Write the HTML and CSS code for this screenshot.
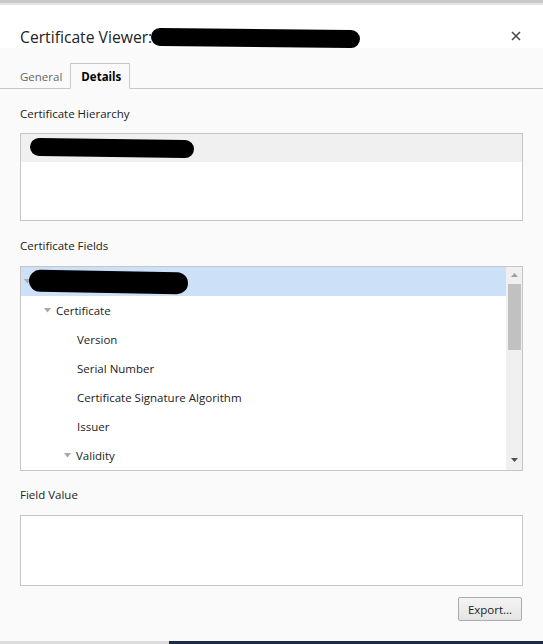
FILE: index.html
```html
<!DOCTYPE html>
<html>
<head>
<meta charset="utf-8">
<link rel="stylesheet" href="styles.css">
</head>
<body>
<div class="topbar"></div>
<header class="titlebar">
  <h1 class="title">Certificate Viewer:<span class="redact redact-title"></span></h1>
  <svg class="close" width="10" height="10" viewBox="0 0 10 10"><path d="M1 1 L9 9 M9 1 L1 9" stroke="#4a4a4a" stroke-width="1.6" fill="none"/></svg>
</header>
<main class="content">
  <nav class="tabs">
    <span class="tab">General</span>
    <span class="tab active">Details</span>
  </nav>

  <div class="label label-first">Certificate Hierarchy</div>
  <div class="box hierarchy">
    <div class="hrow"><span class="redact redact-h"></span></div>
  </div>

  <div class="label label-fields">Certificate Fields</div>
  <div class="box fields">
    <div class="rows">
      <div class="row selected lvl0"><svg class="tri" width="7" height="5" viewBox="0 0 7 5"><path d="M0 0 H7 L3.5 4.5 Z" fill="#a8a8a8"/></svg><span class="redact redact-f"></span></div>
      <div class="row lvl1"><svg class="tri" width="7" height="5" viewBox="0 0 7 5"><path d="M0 0 H7 L3.5 4.5 Z" fill="#a8a8a8"/></svg>Certificate</div>
      <div class="row lvl2">Version</div>
      <div class="row lvl2">Serial Number</div>
      <div class="row lvl2">Certificate Signature Algorithm</div>
      <div class="row lvl2">Issuer</div>
      <div class="row lvl2b"><svg class="tri" width="7" height="5" viewBox="0 0 7 5"><path d="M0 0 H7 L3.5 4.5 Z" fill="#a8a8a8"/></svg>Validity</div>
    </div>
    <div class="scrollbar">
      <svg class="arrow up" width="7" height="4" viewBox="0 0 7 4"><path d="M0 4 H7 L3.5 0 Z" fill="#a0a0a0"/></svg>
      <div class="thumb"></div>
      <svg class="arrow down" width="7" height="4" viewBox="0 0 7 4"><path d="M0 0 H7 L3.5 4 Z" fill="#505050"/></svg>
    </div>
  </div>

  <div class="label">Field Value</div>
  <div class="box value"></div>

  <div class="actions">
    <button class="btn">Export...</button>
  </div>
</main>
<footer class="bottom">
  <div class="bottom-left"></div>
  <div class="bottom-right"></div>
</footer>
</body>
</html>
```

FILE: styles.css
```css
html, body {
  margin: 0;
  padding: 0;
}
body {
  width: 543px;
  height: 644px;
  overflow: hidden;
  background: #fafafa;
  font-family: "Open Sans", "Noto Sans", "Liberation Sans", sans-serif;
  font-size: 11.5px;
  color: #222;
  display: flex;
  flex-direction: column;
}
.topbar {
  height: 3px;
  background: #c9c9c9;
  border-bottom: 2px solid #e4e4e4;
  flex: none;
}
.titlebar {
  flex: none;
  height: 43px;
  background: #fff;
  display: flex;
  align-items: flex-start;
  justify-content: space-between;
  padding: 0 22px 0 20px;
}
.title {
  margin: 22px 0 0 0;
  font-size: 15.7px;
  font-weight: normal;
  color: #222;
  line-height: 20px;
  display: flex;
  align-items: center;
}
.redact {
  display: inline-block;
  background: #000;
  border-radius: 10px;
}
.redact-title {
  width: 209px;
  height: 18px;
  margin-left: -1px;
  margin-top: 2px;
  border-radius: 9px;
  transform: rotate(0.6deg);
}
.close {
  margin-top: 26px;
}
.content {
  flex: 1;
  padding: 0 20px;
  display: flex;
  flex-direction: column;
}
.tabs {
  margin-top: 15px;
  height: 25px;
  display: flex;
  align-items: stretch;
  border-bottom: 1px solid #c8c8c8;
  margin-left: -20px;
  margin-right: -20px;
  padding-left: 20px;
}
.tab {
  display: flex;
  align-items: center;
  color: #666;
  padding-top: 1px;
}
.tab.active {
  color: #000;
  font-weight: bold;
  border: 1px solid #c8c8c8;
  border-bottom: 1px solid #fafafa;
  margin-bottom: -1px;
  margin-left: 8px;
  padding: 1px 8px 0 10px;
  background: #fafafa;
}
.label {
  margin-top: 16px;
  line-height: 16px;
  height: 16px;
  color: #222;
}
.label-first {
  margin-top: 17px;
}
.label-fields {
  margin-top: 17px;
}
.box {
  margin-top: 12px;
  border: 1px solid #c6c6c6;
  background: #fff;
  flex: none;
}
.hierarchy {
  height: 86px;
  margin-top: 11px;
}
.hrow {
  height: 28px;
  background: #f0f0f0;
  display: flex;
  align-items: center;
  padding-left: 9px;
}
.redact-h {
  width: 164px;
  height: 18px;
  transform: rotate(0.8deg);
}
.fields {
  height: 203px;
  margin-top: 12px;
  display: flex;
}
.rows {
  flex: 1;
  display: flex;
  flex-direction: column;
}
.row {
  height: 29px;
  display: flex;
  align-items: center;
  flex: none;
  color: #222;
}
.row.selected {
  background: #cce0f8;
}
.tri {
  margin-right: 5px;
  flex: none;
}
.lvl0 { padding-left: 3px; }
.lvl0 .tri { margin-right: 0; }
.redact-f {
  width: 159px;
  height: 22px;
  margin-left: -2px;
  transform: rotate(1deg);
  border-radius: 11px;
}
.lvl1 { padding-left: 23px; }
.lvl2 { padding-left: 56px; }
.lvl2b { padding-left: 43px; }
.scrollbar {
  width: 16px;
  background: #f0f0f0;
  display: flex;
  flex-direction: column;
  align-items: center;
  flex: none;
}
.arrow.up {
  margin-top: 6px;
}
.thumb {
  margin-top: 7px;
  width: 13px;
  height: 66px;
  background: #c1c1c1;
}
.arrow.down {
  margin-top: auto;
  margin-bottom: 8px;
}
.value {
  height: 69px;
  margin-top: 12px;
}
.actions {
  display: flex;
  justify-content: flex-end;
  margin-top: 11px;
  padding-right: 1px;
}
.btn {
  font-family: inherit;
  font-size: 11.5px;
  color: #222;
  width: 64px;
  height: 24px;
  padding: 0;
  border: 1px solid #acacac;
  border-radius: 2px;
  background: linear-gradient(#f4f4f4, #e4e4e4);
}
.bottom {
  flex: none;
  height: 3px;
  display: flex;
  margin-top: auto;
}
.bottom-left {
  width: 169px;
  background: #dcdcdc;
}
.bottom-right {
  flex: 1;
  background: #1e2b48;
}
```
